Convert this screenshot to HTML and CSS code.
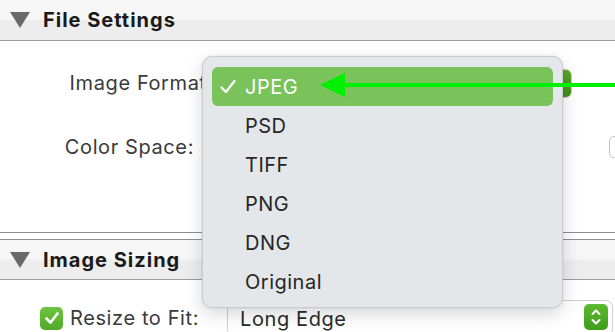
FILE: index.html
```html
<!DOCTYPE html>
<html>
<head>
  <title>Export Settings</title>
  <link rel="stylesheet" href="styles.css">
</head>
<body>
  <div class="panel">
    <div class="section-head">
      <span class="disclosure"></span>
      <span class="section-title">File Settings</span>
    </div>
    <div class="section-body file-body">
      <div class="field-row">
        <span class="field-label format-label">Image Format:</span>
        <div class="popup format-popup">
          <span class="stepper"></span>
        </div>
      </div>
      <div class="field-row">
        <span class="field-label">Color Space:</span>
        <div class="popup space-popup"></div>
        <span class="side-check"></span>
      </div>
    </div>

    <div class="section-head sizing-head">
      <span class="disclosure"></span>
      <span class="section-title">Image Sizing</span>
    </div>
    <div class="section-body">
      <div class="resize-row">
        <span class="checkbox">
          <svg viewBox="0 0 22 22" width="22" height="22">
            <path d="M5.5 11.5 L9.5 15.5 L16.5 6.5" fill="none" stroke="#fff" stroke-width="2.6" stroke-linecap="round" stroke-linejoin="round"/>
          </svg>
        </span>
        <span class="resize-label">Resize to Fit:</span>
        <div class="popup wide">
          <span class="popup-value">Long Edge</span>
          <span class="stepper">
            <svg viewBox="0 0 24 26" width="24" height="26">
              <path d="M8.5 10 L12 6.5 L15.5 10" fill="none" stroke="#fff" stroke-width="2" stroke-linecap="round" stroke-linejoin="round"/>
              <path d="M8.5 16 L12 19.5 L15.5 16" fill="none" stroke="#fff" stroke-width="2" stroke-linecap="round" stroke-linejoin="round"/>
            </svg>
          </span>
        </div>
      </div>
    </div>
  </div>

  <!-- open format menu, drawn over the panel -->
  <ul class="menu">
    <li class="menu-item selected">
      <svg class="tick" viewBox="0 0 18 18" width="18" height="18">
        <path d="M2.5 9.5 L7 14 L15.5 3" fill="none" stroke="#fff" stroke-width="2.2" stroke-linecap="round" stroke-linejoin="round"/>
      </svg>JPEG
    </li>
    <li class="menu-item">PSD</li>
    <li class="menu-item">TIFF</li>
    <li class="menu-item">PNG</li>
    <li class="menu-item">DNG</li>
    <li class="menu-item">Original</li>
  </ul>

  <svg class="pointer" width="300" height="30" viewBox="0 0 300 30">
    <polygon points="5,15 30,3 30,27" fill="#00f000"/>
    <rect x="28" y="13" width="272" height="4" fill="#00f000"/>
  </svg>
</body>
</html>
```

FILE: styles.css
```css
body {
  margin: 0;
  width: 615px;
  height: 332px;
  overflow: hidden;
  position: relative;
  background: #fff;
  font-family: "Inter", "Liberation Sans", sans-serif;
  color: #333;
}

.panel {
  display: flex;
  flex-direction: column;
  overflow: hidden;
}

.section-head {
  height: 40px;
  display: flex;
  align-items: center;
  gap: 13px;
  padding-left: 10px;
  background: linear-gradient(#f7f7f7 0, #f7f7f7 48%, #ededed 52%, #ededed 100%);
  border-bottom: 1px solid #9c9c9c;
}

.sizing-head {
  height: 39px;
  border-top: 1px solid #8e8e8e;
  margin-top: 6px;
}

.disclosure {
  width: 0;
  height: 0;
  border-left: 10px solid transparent;
  border-right: 10px solid transparent;
  border-top: 16px solid #6a6a6a;
}

.section-title {
  font-size: 20px;
  font-weight: 700;
  letter-spacing: 1px;
  color: #1a1a1a;
}

.section-body {
  background: #fff;
}

.file-body {
  height: 192px;
  border-bottom: 1px solid #8e8e8e;
  padding-top: 27px;
  box-sizing: border-box;
  display: flex;
  flex-direction: column;
  gap: 34px;
}

.field-row {
  display: flex;
  align-items: center;
  height: 30px;
}

.field-label {
  width: 194px;
  text-align: right;
  font-size: 20px;
  letter-spacing: 0.6px;
  color: #3a3a3a;
  flex-shrink: 0;
  white-space: nowrap;
}

.format-label {
  width: 213px;
}

.popup {
  margin-left: 11px;
  height: 29px;
  border: 1px solid #cfcfcf;
  border-radius: 6px;
  display: flex;
  align-items: center;
  justify-content: flex-end;
  box-sizing: border-box;
  background: #fff;
  flex-shrink: 0;
}

.format-popup {
  margin-left: 0;
  width: 359px;
}

.space-popup {
  width: 340px;
}

.popup-value {
  font-size: 20px;
  letter-spacing: 0.6px;
  padding-left: 12px;
  color: #222;
}

.stepper {
  width: 22px;
  height: 27px;
  border-radius: 5px;
  background: linear-gradient(#5aa82a, #3f8f18);
}

.side-check {
  margin-left: 64px;
  width: 20px;
  height: 20px;
  border: 1px solid #c4c4c4;
  border-radius: 5px;
  background: #fff;
  flex-shrink: 0;
}

.resize-row {
  display: flex;
  align-items: center;
  padding: 20px 0 0 40px;
}

.checkbox {
  width: 23px;
  height: 23px;
  border-radius: 5px;
  background: linear-gradient(#6fc43f, #4faa28);
  display: flex;
  align-items: center;
  justify-content: center;
  flex-shrink: 0;
}

.resize-label {
  margin-left: 7px;
  width: 157px;
  font-size: 20px;
  letter-spacing: 0.6px;
  color: #3a3a3a;
  white-space: nowrap;
}

.popup.wide {
  margin-left: 0;
  width: 386px;
  height: 36px;
  border-radius: 7px;
  padding-right: 4px;
  justify-content: space-between;
  align-items: flex-start;
  padding-top: 3px;
}

.popup.wide .popup-value {
  color: #2a2a2a;
  padding-top: 3px;
}

.popup.wide .stepper {
  width: 24px;
  height: 26px;
  background: linear-gradient(#5dba30, #3f9d1c);
  display: flex;
  align-items: center;
  justify-content: center;
}

.menu {
  position: absolute;
  left: 202px;
  top: 56px;
  width: 361px;
  height: 252px;
  margin: 0;
  padding: 10px 9px 8px;
  box-sizing: border-box;
  list-style: none;
  background: #e4e7ea;
  border: 1px solid #c9cbce;
  border-radius: 10px;
  box-shadow: 0 6px 18px rgba(0, 0, 0, 0.16), 0 0 2px rgba(0, 0, 0, 0.12);
}

.menu-item {
  height: 39px;
  display: flex;
  align-items: center;
  padding-left: 33px;
  font-size: 20px;
  letter-spacing: 0.5px;
  color: #262626;
  border-radius: 6px;
}

.menu-item.selected {
  background: #7ac35a;
  color: #fff;
  padding-left: 7px;
}

.tick {
  margin-right: 8px;
}

.pointer {
  position: absolute;
  left: 315px;
  top: 70px;
}
```
